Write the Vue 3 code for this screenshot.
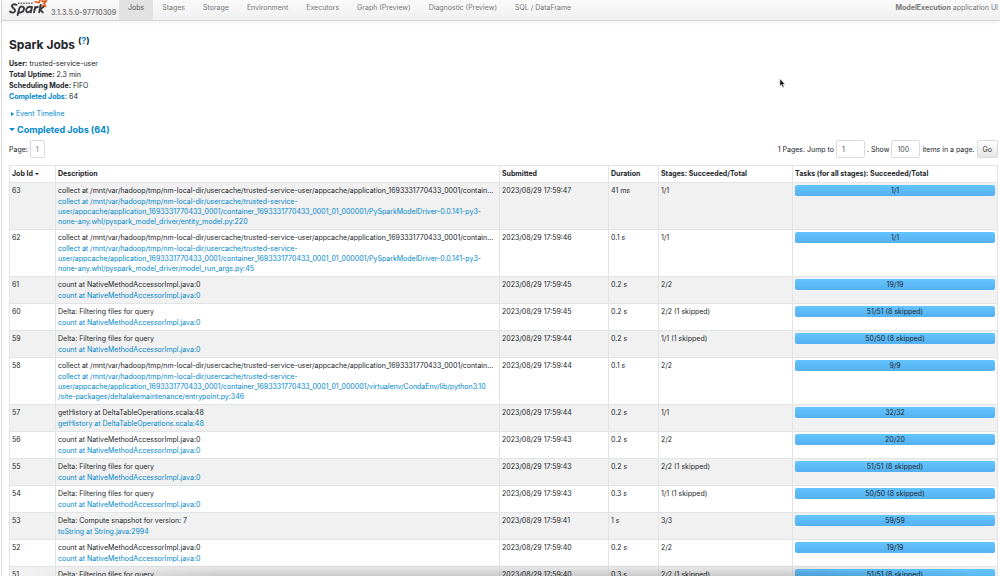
<template>
  <div class="page">
    <header class="navbar">
      <a class="brand" href="#">
        <svg class="logo" viewBox="0 0 40 18" role="img" aria-label="Apache Spark">
          <g fill="none" stroke="#e25a1c" stroke-width="1.6" stroke-linejoin="round">
            <path d="M25.5 1.6 L30 2.8 L31.5 -1 M33.5 -1 L33.2 1.8 L37.5 0.8 L35 3.6 L36.6 6.4 L32.4 5.2" />
          </g>
          <g fill="none" stroke="#3c3a3e" stroke-width="1.9" stroke-linecap="round" stroke-linejoin="round">
            <path d="M7.4 4.8 C4.4 3.4 2.2 5 3.2 6.8 C4.2 8.6 7 9 6 11.2 C5 13.2 2 12.8 1 11.4" />
            <path d="M8.6 15 L10.4 8 C12 5.6 15.4 6.4 15 9.2 C14.6 12.4 11 13.2 9.6 11.6" />
            <path d="M22.6 7.2 C19.4 5.6 16.8 8.2 17.2 10.8 C17.8 13.4 21 12.2 22.2 9.8 L23 7 L21.8 12.4" />
            <path d="M25 12.4 L26.2 7 M26 8.8 C26.6 7.2 27.6 6.8 28.8 7" />
            <path d="M30.2 12.4 L31.6 5 M34.4 7 L31 9.4 L33.8 12.4" />
          </g>
          <path d="M9 3.2 H24" fill="none" stroke="#6a686c" stroke-width="1.4" stroke-dasharray="1.6 1" />
        </svg>
        <span class="version">3.1.3.5.0-97710309</span>
      </a>
      <nav class="tabs">
        <a v-for="tab in tabs" :key="tab" href="#" :class="{ active: tab === 'Jobs' }">{{ tab }}</a>
      </nav>
      <p class="app-name"><strong>ModelExecution</strong> application UI</p>
    </header>

    <main class="content">
      <h1>Spark Jobs <sup>(<a href="#">?</a>)</sup></h1>
      <ul class="summary">
        <li><strong>User:</strong> trusted-service-user</li>
        <li><strong>Total Uptime:</strong> 2.3 min</li>
        <li><strong>Scheduling Mode:</strong> FIFO</li>
        <li><a href="#completed"><strong>Completed Jobs:</strong></a> 64</li>
      </ul>

      <a class="timeline" href="#"><span class="arrow right"></span>Event Timeline</a>
      <h2 id="completed"><a href="#completed"><span class="arrow down"></span>Completed Jobs (64)</a></h2>

      <div class="paging">
        <div class="pages">Page: <a class="page-link" href="#">1</a></div>
        <form class="jump" @submit.prevent>
          <label for="page-no">1 Pages. Jump to</label>
          <input id="page-no" v-model="pageNo" type="text" />
          <label for="page-size">. Show</label>
          <input id="page-size" v-model="pageSize" type="text" />
          <span>items in a page.</span>
          <button type="submit">Go</button>
        </form>
      </div>

      <table>
        <colgroup>
          <col class="c-id" />
          <col />
          <col class="c-submitted" />
          <col class="c-duration" />
          <col class="c-stages" />
          <col class="c-tasks" />
        </colgroup>
        <thead>
          <tr>
            <th>Job Id <span class="arrow sort"></span></th>
            <th>Description</th>
            <th>Submitted</th>
            <th>Duration</th>
            <th>Stages: Succeeded/Total</th>
            <th>Tasks (for all stages): Succeeded/Total</th>
          </tr>
        </thead>
        <tbody>
          <tr v-for="job in jobs" :key="job.id">
            <td>{{ job.id }}</td>
            <td>
              <span class="desc">{{ job.desc }}</span>
              <a class="job-link" href="#">{{ job.link }}</a>
            </td>
            <td>2023/08/29 {{ job.time }}</td>
            <td>{{ job.duration }}</td>
            <td>{{ job.stages }}</td>
            <td><div class="progress">{{ job.tasks }}</div></td>
          </tr>
        </tbody>
      </table>
    </main>

    <div class="bottom-shade"></div>
    <svg class="cursor" viewBox="0 0 8 12" aria-hidden="true">
      <path d="M1 0.6 V9 L2.9 7.3 L4.3 10.6 L5.8 10 L4.4 6.8 H7 Z" fill="#111" stroke="#fff" stroke-width="0.6" />
    </svg>
  </div>
</template>

<script setup>
import { ref } from 'vue'

const tabs = ['Jobs', 'Stages', 'Storage', 'Environment', 'Executors', 'Graph (Preview)', 'Diagnostic (Preview)', 'SQL / DataFrame']

const pageNo = ref('1')
const pageSize = ref('100')

const collect = 'collect at /mnt/var/hadoop/tmp/nm-local-dir/usercache/trusted-service-user/appcache/application_1693331770433_0001/contain...'
const container = 'collect at /mnt/var/hadoop/tmp/nm-local-dir/usercache/trusted-service-\nuser/appcache/application_1693331770433_0001/container_1693331770433_0001_01_000001/'
const count = 'count at NativeMethodAccessorImpl.java:0'
const filtering = 'Delta: Filtering files for query'
const history = 'getHistory at DeltaTableOperations.scala:48'

const jobs = [
  { id: 63, desc: collect, link: container + 'PySparkModelDriver-0.0.141-py3-\nnone-any.whl/pyspark_model_driver/entity_model.py:220', time: '17:59:47', duration: '41 ms', stages: '1/1', tasks: '1/1' },
  { id: 62, desc: collect, link: container + 'PySparkModelDriver-0.0.141-py3-\nnone-any.whl/pyspark_model_driver/model_run_args.py:45', time: '17:59:46', duration: '0.1 s', stages: '1/1', tasks: '1/1' },
  { id: 61, desc: count, link: count, time: '17:59:45', duration: '0.2 s', stages: '2/2', tasks: '19/19' },
  { id: 60, desc: filtering, link: count, time: '17:59:45', duration: '0.2 s', stages: '2/2 (1 skipped)', tasks: '51/51 (8 skipped)' },
  { id: 59, desc: filtering, link: count, time: '17:59:44', duration: '0.2 s', stages: '1/1 (1 skipped)', tasks: '50/50 (8 skipped)' },
  { id: 58, desc: collect, link: container + 'virtualenv/CondaEnv/lib/python3.10\n/site-packages/deltalakemaintenance/entrypoint.py:346', time: '17:59:44', duration: '0.1 s', stages: '2/2', tasks: '9/9' },
  { id: 57, desc: history, link: history, time: '17:59:44', duration: '0.2 s', stages: '1/1', tasks: '32/32' },
  { id: 56, desc: count, link: count, time: '17:59:43', duration: '0.2 s', stages: '2/2', tasks: '20/20' },
  { id: 55, desc: filtering, link: count, time: '17:59:43', duration: '0.2 s', stages: '2/2 (1 skipped)', tasks: '51/51 (8 skipped)' },
  { id: 54, desc: filtering, link: count, time: '17:59:43', duration: '0.3 s', stages: '1/1 (1 skipped)', tasks: '50/50 (8 skipped)' },
  { id: 53, desc: 'Delta: Compute snapshot for version: 7', link: 'toString at String.java:2994', time: '17:59:41', duration: '1 s', stages: '3/3', tasks: '59/59' },
  { id: 52, desc: count, link: count, time: '17:59:40', duration: '0.2 s', stages: '2/2', tasks: '19/19' },
  { id: 51, desc: filtering, link: count, time: '17:59:40', duration: '0.3 s', stages: '2/2 (1 skipped)', tasks: '51/51 (8 skipped)' }
]
</script>

<style>
body {
  margin: 0;
  height: 100vh;
  overflow: hidden;
}
</style>

<style scoped>
.page {
  position: relative;
  margin-left: 1px;
  border-left: 1px solid #d9d9d9;
  font: 7px/11px Inter, "Liberation Sans", sans-serif;
  color: #212529;
}

a {
  color: #0088cc;
  text-decoration: none;
}

.navbar {
  display: flex;
  height: 20px;
  padding: 0 2px 0 7px;
  background: linear-gradient(#fafafa, #f0f0f0);
  border-bottom: 1px solid #d4d4d4;
  box-shadow: 0 1px 4px rgba(0, 0, 0, 0.07);
}

.brand {
  display: flex;
  gap: 2px;
  width: 110px;
}

.logo {
  flex: none;
  width: 40px;
  height: 18px;
}

.version {
  padding-top: 7px;
  font-weight: 600;
  white-space: nowrap;
  color: #777;
}

.tabs {
  display: flex;
}

.tabs a {
  padding: 2px 9px 0;
  color: #777;
}

.tabs a.active {
  background: #e2e2e2;
  color: #555;
}

.app-name {
  margin: 2px 0 0 auto;
  color: #777;
}

.content {
  padding: 15px 2px 0 7px;
}

h1 {
  margin: 0;
  font-size: 12px;
  line-height: 17px;
  font-weight: 700;
}

sup {
  font-size: 9px;
  line-height: 0;
}

.summary {
  margin: 5px 0 6px;
  padding: 0;
  list-style: none;
}

.timeline {
  display: flex;
  align-items: center;
}

.arrow {
  display: inline-block;
  border: 2px solid transparent;
}

.arrow.right {
  margin: 0 2px;
  border-left: 3px solid #0088cc;
  border-right: 0;
}

.arrow.down {
  margin-right: 2px;
  border-width: 3px;
  border-top-color: #0088cc;
  border-bottom: 0;
}

.arrow.sort {
  border-top-color: #212529;
  border-bottom: 0;
  vertical-align: middle;
}

h2 {
  margin: 4px 0;
  font-size: 9px;
  line-height: 13px;
  font-weight: 700;
}

h2 a {
  display: flex;
  align-items: center;
}

.paging {
  display: flex;
  justify-content: space-between;
  margin-bottom: 7px;
}

.pages,
.jump {
  display: flex;
  align-items: center;
  gap: 2px;
}

.page-link,
.jump input,
.jump button {
  box-sizing: border-box;
  height: 18px;
  border: 1px solid #d8dce0;
  border-radius: 2px;
  font: inherit;
}

.page-link {
  padding: 3px 5px;
  color: #777;
}

.jump input {
  width: 29px;
  padding: 0 5px;
  color: #495057;
}

.jump button {
  padding: 0 5px;
  background: linear-gradient(#fff, #e6e6e6);
  color: #333;
}

table {
  width: 100%;
  table-layout: fixed;
  border-collapse: collapse;
}

.c-id {
  width: 46px;
}

.c-submitted {
  width: 109px;
}

.c-duration {
  width: 50px;
}

.c-stages {
  width: 134px;
}

.c-tasks {
  width: 205px;
}

th,
td {
  padding: 2px;
  border: 1px solid #e2e5e8;
  line-height: 12px;
  text-align: left;
  vertical-align: top;
  white-space: nowrap;
}

th {
  font-weight: 700;
}

tbody tr:nth-child(odd) {
  background: #f1f1f1;
}

.desc,
.job-link {
  display: block;
}

.job-link {
  line-height: 10px;
  white-space: pre;
}

.progress {
  height: 11px;
  border-radius: 2px;
  background: linear-gradient(#64c5ff, #54b0f0);
  line-height: 12px;
  text-align: center;
}

.bottom-shade {
  position: fixed;
  right: 30px;
  bottom: 0;
  left: 30px;
  height: 12px;
  background: linear-gradient(transparent, rgba(0, 0, 0, 0.16));
  mask-image: linear-gradient(90deg, transparent, #000 20%, #000 80%, transparent);
  pointer-events: none;
}

.cursor {
  position: absolute;
  top: 78px;
  left: 777px;
  width: 7px;
  height: 11px;
}
</style>
